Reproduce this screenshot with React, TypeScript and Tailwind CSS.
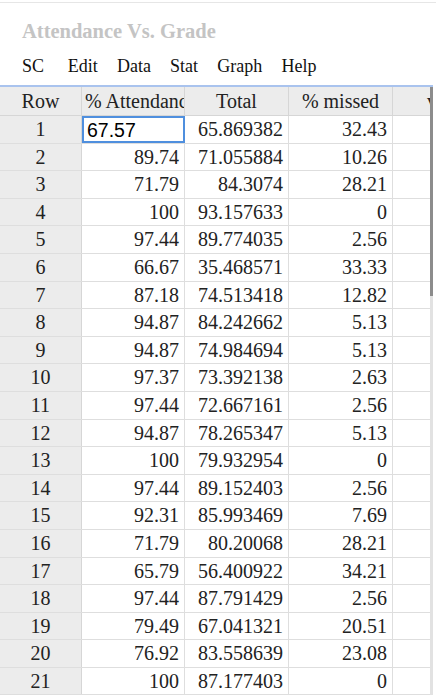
// App.tsx — StatCrunch-style data grid "Attendance Vs. Grade"

const rows: [string, string, string][] = [
  ["67.57", "65.869382", "32.43"],
  ["89.74", "71.055884", "10.26"],
  ["71.79", "84.3074", "28.21"],
  ["100", "93.157633", "0"],
  ["97.44", "89.774035", "2.56"],
  ["66.67", "35.468571", "33.33"],
  ["87.18", "74.513418", "12.82"],
  ["94.87", "84.242662", "5.13"],
  ["94.87", "74.984694", "5.13"],
  ["97.37", "73.392138", "2.63"],
  ["97.44", "72.667161", "2.56"],
  ["94.87", "78.265347", "5.13"],
  ["100", "79.932954", "0"],
  ["97.44", "89.152403", "2.56"],
  ["92.31", "85.993469", "7.69"],
  ["71.79", "80.20068", "28.21"],
  ["65.79", "56.400922", "34.21"],
  ["97.44", "87.791429", "2.56"],
  ["79.49", "67.041321", "20.51"],
  ["76.92", "83.558639", "23.08"],
  ["100", "87.177403", "0"],
];

const menu = ["SC", "Edit", "Data", "Stat", "Graph", "Help"];

export default function App() {
  return (
    <div className="w-[436px] h-[700px] overflow-hidden bg-white text-[#222] font-['Liberation_Serif',serif]">
      {/* top rule */}
      <div className="mt-[2px] h-px bg-[#e6e6e6]" />

      {/* title */}
      <h1 className="pl-[22px] pt-[16px] h-[51px] text-[20.5px] leading-[24px] font-bold text-[#c4c4c4]">
        Attendance Vs. Grade
      </h1>

      {/* menu bar */}
      <nav className="flex gap-[19.2px] pl-[22px] h-[31px] text-[18px] leading-[24px] text-[#111]">
        {menu.map((m) => (
          <span key={m} className={m === "SC" ? "mr-[4.5px]" : ""}>
            {m}
          </span>
        ))}
      </nav>

      {/* grid */}
      <div className="relative w-[433px] border-t-2 border-[#a9c3ee]">
        {/* header */}
        <div className="flex h-[29px] bg-[#ececec] border-b border-[#d6d6d6] text-[20px] leading-[28px]">
          <div className="w-[82px] shrink-0 text-center border-r border-[#d6d6d6]">Row</div>
          <div className="w-[103px] shrink-0 pl-[3px] overflow-hidden whitespace-nowrap border-r border-[#d6d6d6]">
            % Attendance
          </div>
          <div className="w-[104px] shrink-0 text-center border-r border-[#d6d6d6]">Total</div>
          <div className="w-[104px] shrink-0 text-center border-r border-[#d6d6d6]">% missed</div>
          <div className="flex-1 overflow-hidden whitespace-nowrap pl-[34px]">var5</div>
        </div>

        {/* rows */}
        {rows.map(([att, total, missed], i) => (
          <div
            key={i}
            className="flex h-[27.6px] border-b border-[#dedede] text-[20px] leading-[26px]"
          >
            <div className="w-[82px] shrink-0 text-center bg-[#ececec] border-r border-[#d6d6d6]">
              {i + 1}
            </div>
            {i === 0 ? (
              <div className="w-[103px] shrink-0 border-2 border-[#4f8fde] pl-[3px] font-['Liberation_Sans',sans-serif] text-[19.5px] leading-[24px] text-black">
                {att}
              </div>
            ) : (
              <div className="w-[103px] shrink-0 text-right pr-[5px] border-r border-[#dedede]">
                {att}
              </div>
            )}
            <div className="w-[104px] shrink-0 text-right pr-[5px] border-r border-[#dedede]">
              {total}
            </div>
            <div className="w-[104px] shrink-0 text-right pr-[5px] border-r border-[#dedede]">
              {missed}
            </div>
            <div className="flex-1" />
          </div>
        ))}

        {/* vertical scrollbar */}
        <div className="absolute right-0 top-0 bottom-0 w-[3px] bg-[#e2e2e2]">
          <div className="h-[209px] bg-[#8c8c8c]" />
        </div>
      </div>
    </div>
  );
}
